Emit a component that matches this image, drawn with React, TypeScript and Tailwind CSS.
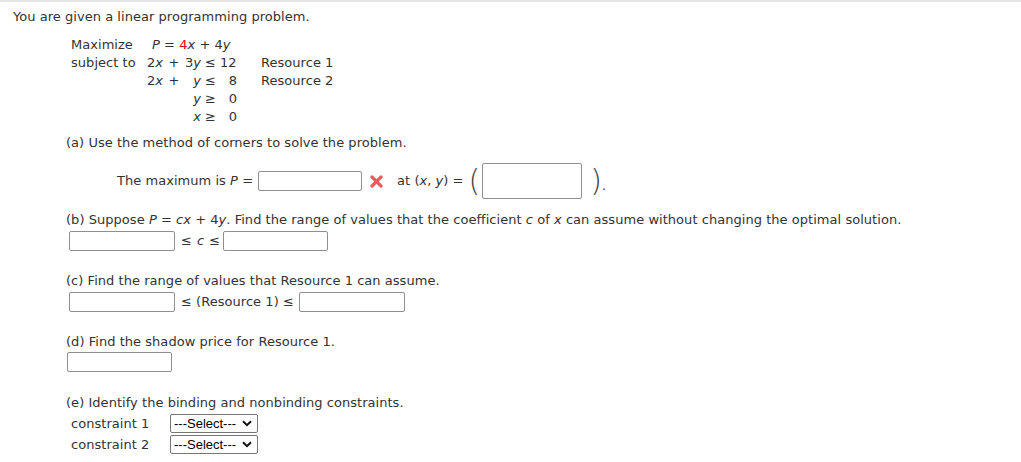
import React from "react";

const font = { fontFamily: '"DejaVu Sans", Verdana, sans-serif' };

function Box({ className = "" }: { className?: string }) {
  return (
    <span
      className={`inline-block border border-[#8f8f8f] rounded-[2px] bg-white align-middle ${className}`}
    />
  );
}

function Select() {
  return (
    <span
      className="inline-flex h-[19px] w-[88px] items-center justify-between rounded-[2px] border border-[#767676] bg-white pl-[3px] pr-[5px] text-[13px] tracking-normal text-black"
      style={{ fontFamily: '"Liberation Sans", Arial, sans-serif' }}
    >
      <span>---Select---</span>
      <svg width="10" height="7" viewBox="0 0 10 7" aria-hidden="true">
        <path d="M1 1.2 L5 5.2 L9 1.2" fill="none" stroke="#111" strokeWidth="2" />
      </svg>
    </span>
  );
}

const I = ({ children }: { children: React.ReactNode }) => <i>{children}</i>;

export default function App() {
  return (
    <div
      className="min-h-[462px] w-[1021px] border-t-2 border-[#e6e6e6] bg-white text-[13px] leading-[18px] tracking-[0.04px] text-[#333]"
      style={font}
    >
      <div className="pl-[13px] pt-[6px]">You are given a linear programming problem.</div>

      {/* LP statement */}
      <div className="ml-[71px] mt-[10px]">
        <div className="flex">
          <span className="w-[81px]">Maximize</span>
          <span>
            <I>P</I> = <span className="text-[#e8000b]">4</span>
            <I>x</I> + 4<I>y</I>
          </span>
        </div>
        <div className="grid grid-cols-[76px_19px_16px_19px_19px_19px_22px_auto]">
          <span>subject to</span>
          <span>
            2<I>x</I>
          </span>
          <span className="text-center">+</span>
          <span className="text-right">
            3<I>y</I>
          </span>
          <span className="text-center">≤</span>
          <span>12</span>
          <span />
          <span>Resource 1</span>

          <span />
          <span>
            2<I>x</I>
          </span>
          <span className="text-center">+</span>
          <span className="text-right">
            <I>y</I>
          </span>
          <span className="text-center">≤</span>
          <span className="text-right pr-[2px]">8</span>
          <span />
          <span>Resource 2</span>

          <span />
          <span />
          <span />
          <span className="text-right">
            <I>y</I>
          </span>
          <span className="text-center">≥</span>
          <span className="text-right pr-[2px]">0</span>
          <span />
          <span />

          <span />
          <span />
          <span />
          <span className="text-right">
            <I>x</I>
          </span>
          <span className="text-center">≥</span>
          <span className="text-right pr-[2px]">0</span>
          <span />
          <span />
        </div>
      </div>

      {/* (a) */}
      <div className="ml-[66px] mt-[8px]">(a) Use the method of corners to solve the problem.</div>
      <div className="ml-[117px] mt-[11px] flex items-center">
        <span>
          The maximum is <I>P</I> =
        </span>
        <Box className="ml-[5px] h-[20px] w-[104px]" />
        <svg className="ml-[8px]" width="13" height="13" viewBox="0 0 13 13" aria-hidden="true">
          <path d="M2 2 L11 11 M11 2 L2 11" stroke="#ee5a5f" strokeWidth="3.2" strokeLinecap="round" />
        </svg>
        <span className="ml-[14px]">
          at (<I>x</I>, <I>y</I>) =
        </span>
        <span className="ml-[5px] text-[30px] font-extralight leading-[30px] text-[#444]">(</span>
        <Box className="ml-[2px] h-[36px] w-[100px]" />
        <span className="ml-[8px] text-[30px] font-extralight leading-[30px] text-[#444]">)</span>
        <span className="mt-[10px]">.</span>
      </div>

      {/* (b) */}
      <div className="ml-[66px] mt-[12px]">
        (b) Suppose <I>P</I> = <I>cx</I> + 4<I>y</I>. Find the range of values that the coefficient{" "}
        <I>c</I> of <I>x</I> can assume without changing the optimal solution.
      </div>
      <div className="ml-[69px] mt-[2px] flex items-center">
        <Box className="h-[20px] w-[106px]" />
        <span className="ml-[6px] flex gap-[5px]">
          <span>≤</span>
          <I>c</I>
          <span>≤</span>
        </span>
        <Box className="ml-[3px] h-[20px] w-[105px]" />
      </div>

      {/* (c) */}
      <div className="ml-[66px] mt-[21px]">(c) Find the range of values that Resource 1 can assume.</div>
      <div className="ml-[69px] mt-[2px] flex items-center">
        <Box className="h-[20px] w-[106px]" />
        <span className="ml-[6px]">≤ (Resource 1) ≤</span>
        <Box className="ml-[5px] h-[20px] w-[106px]" />
      </div>

      {/* (d) */}
      <div className="ml-[66px] mt-[21px]">(d) Find the shadow price for Resource 1.</div>
      <div className="ml-[67px] mt-[1px] flex">
        <Box className="h-[20px] w-[105px]" />
      </div>

      {/* (e) */}
      <div className="ml-[66px] mt-[22px]">(e) Identify the binding and nonbinding constraints.</div>
      <div className="ml-[71px] mt-[2px] flex items-center">
        <span className="w-[99px]">constraint 1</span>
        <Select />
      </div>
      <div className="ml-[71px] mt-[2px] flex items-center">
        <span className="w-[99px]">constraint 2</span>
        <Select />
      </div>
    </div>
  );
}
